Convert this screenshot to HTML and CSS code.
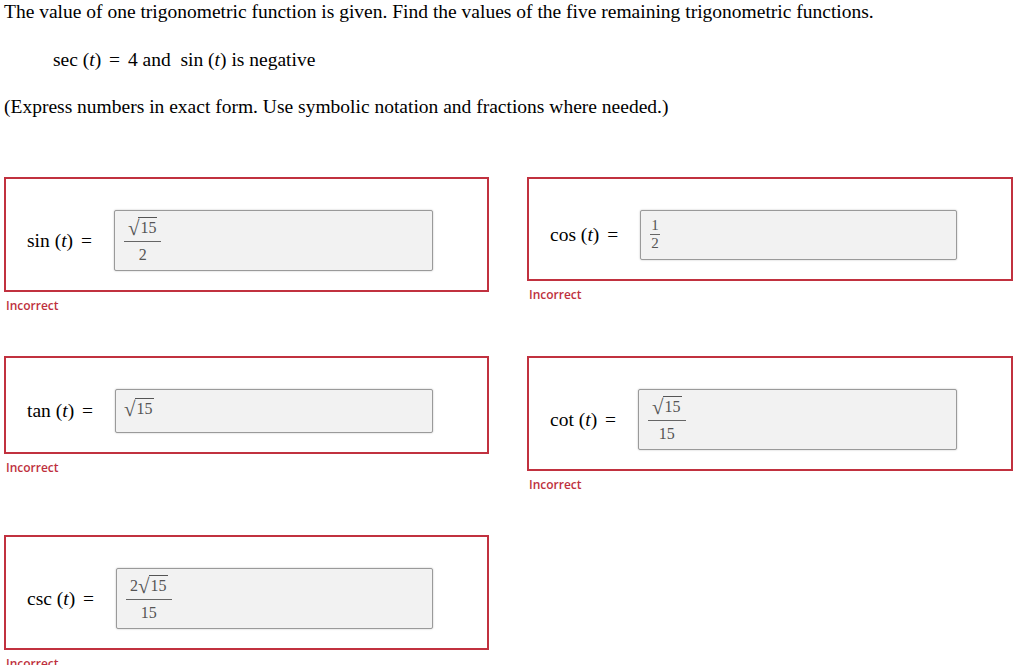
FILE: index.html
```html
<!DOCTYPE html>
<html>
<head>
<meta charset="utf-8">
<link rel="stylesheet" href="styles.css">
</head>
<body>
<div class="page">
  <p class="intro">The value of one trigonometric function is given. Find the values of the five remaining trigonometric functions.</p>
  <p class="given">sec (<i>t</i>) <span class="eq">=</span> 4 and&nbsp; sin (<i>t</i>) is negative</p>
  <p class="note">(Express numbers in exact form. Use symbolic notation and fractions where needed.)</p>

  <div class="grid">
    <div class="cell">
      <div class="box">
        <span class="label">sin (<i>t</i>) <span class="eq">=</span></span>
        <div class="input">
          <span class="frac"><span class="num"><span class="rad">√</span><span class="radicand">15</span></span><span class="den">2</span></span>
        </div>
      </div>
      <div class="status">Incorrect</div>
    </div>

    <div class="cell">
      <div class="box">
        <span class="label">cos (<i>t</i>) <span class="eq">=</span></span>
        <div class="input">
          <span class="frac small"><span class="num">1</span><span class="den">2</span></span>
        </div>
      </div>
      <div class="status">Incorrect</div>
    </div>

    <div class="cell">
      <div class="box">
        <span class="label">tan (<i>t</i>) <span class="eq">=</span></span>
        <div class="input single">
          <span class="num"><span class="rad">√</span><span class="radicand">15</span></span>
        </div>
      </div>
      <div class="status">Incorrect</div>
    </div>

    <div class="cell">
      <div class="box">
        <span class="label">cot (<i>t</i>) <span class="eq">=</span></span>
        <div class="input">
          <span class="frac"><span class="num"><span class="rad">√</span><span class="radicand">15</span></span><span class="den">15</span></span>
        </div>
      </div>
      <div class="status">Incorrect</div>
    </div>

    <div class="cell">
      <div class="box">
        <span class="label">csc (<i>t</i>) <span class="eq">=</span></span>
        <div class="input">
          <span class="frac"><span class="num">2<span class="rad">√</span><span class="radicand">15</span></span><span class="den">15</span></span>
        </div>
      </div>
      <div class="status">Incorrect</div>
    </div>
  </div>
</div>
</body>
</html>
```

FILE: styles.css
```css
html, body {
  margin: 0;
  padding: 0;
  background: #ffffff;
}

.page {
  padding: 0 4px;
  font-family: "Liberation Serif", "Times New Roman", serif;
  color: #000;
  font-size: 19.5px;
}

.intro {
  margin: 0;
  padding-top: 1px;
  line-height: 22px;
}

.given {
  margin: 26px 0 0 49px;
  line-height: 22px;
}

.note {
  margin: 25px 0 0 0;
  line-height: 22px;
}

.eq {
  margin: 0 3px;
}

.grid {
  margin-top: 59px;
  display: grid;
  grid-template-columns: 485px 486px;
  column-gap: 38px;
  row-gap: 41px;
  align-items: start;
}

.box {
  border: 2px solid #c1313f;
  padding: 31px 54px 19px 21px;
  display: flex;
  align-items: center;
}

.label {
  flex: none;
  margin-right: 19px;
  white-space: nowrap;
}

.input {
  flex: 1;
  background: #f2f2f2;
  border: 1px solid #9a9a9a;
  border-radius: 2px;
  box-shadow: 0 0 2px rgba(0,0,0,0.25);
  padding: 6px 9px 6px;
  font-family: "Liberation Serif", "Times New Roman", serif;
  font-size: 16px;
  color: #555;
  min-height: 20px;
}

.input.single {
  padding: 7px 9px 10px 8px;
}

.frac {
  display: inline-flex;
  flex-direction: column;
  align-items: center;
  vertical-align: middle;
}

.frac .num {
  padding: 0 4px 2px;
  border-bottom: 1px solid #666;
  line-height: 21px;
}

.frac .den {
  padding-top: 4px;
  line-height: 18px;
}

.frac.small {
  font-size: 15px;
  padding: 1px 0 2px;
}

.frac.small .num {
  padding: 0 1px 1px;
  line-height: 15px;
}

.frac.small .den {
  padding-top: 1px;
  line-height: 15px;
}

.num {
  display: inline-block;
  white-space: nowrap;
}

.rad {
  font-size: 21px;
  display: inline-block;
  vertical-align: -2px;
  margin-right: -1px;
}

.radicand {
  display: inline-block;
  border-top: 1px solid #555;
  line-height: 17px;
  padding: 1px 1px 0 2px;
}

.status {
  font-family: "Open Sans", "Liberation Sans", sans-serif;
  font-weight: 600;
  font-size: 12px;
  color: #be303d;
  padding: 4px 0 0 2px;
  line-height: 19px;
}
```
